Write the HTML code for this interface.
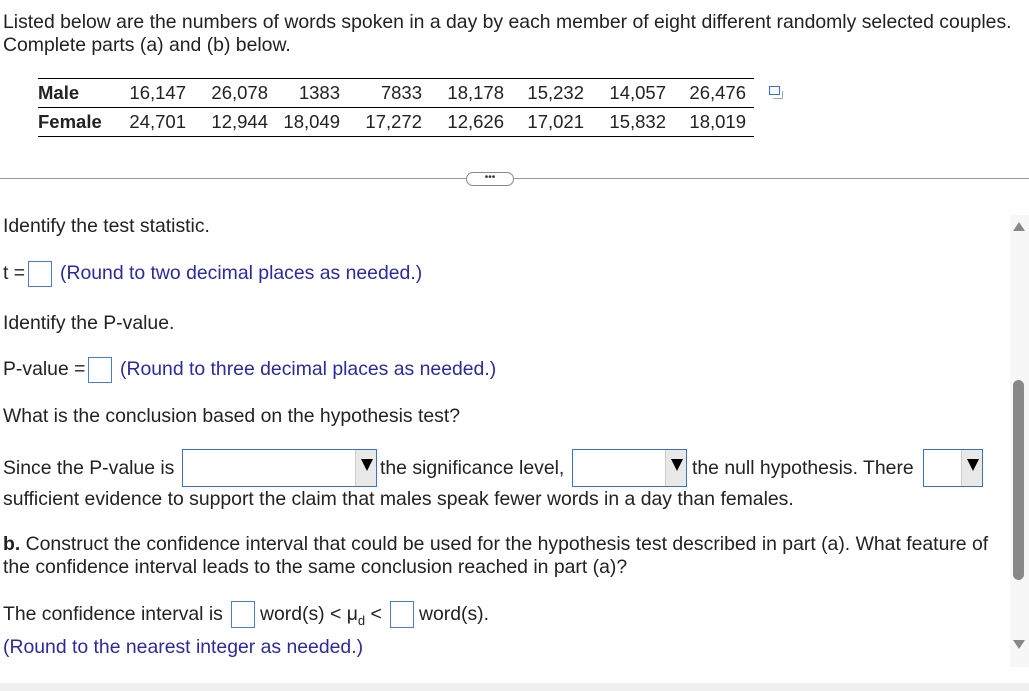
<!DOCTYPE html>
<html><head><style>
body{margin:0;width:1029px;height:691px;position:relative;overflow:hidden;background:#fff;font-family:"Liberation Sans",Arial,sans-serif;font-size:19.4px;color:#222;}
.a{position:absolute;white-space:nowrap;line-height:22px;}
.b{color:#2b2b9a;}
.box{position:absolute;border:1px solid #4a7bd6;background:#fff;}
.dd{position:absolute;border:1px solid #3b6fd4;background:#fff;}
.dd i{position:absolute;right:0;top:0;width:20px;height:100%;background:#e8e8e8;border-left:1px solid #ccc;}
.dd i:after{content:"";position:absolute;left:5px;top:9px;border-left:6px solid transparent;border-right:6px solid transparent;border-top:12px solid #000;}
table{position:absolute;left:38px;top:78px;border-collapse:collapse;font-size:18.5px;}
td{padding:1px 0;height:26px;text-align:right;}
tr:first-child td{border-top:1px solid #000;border-bottom:1px solid #000;}
tr:last-child td{border-bottom:1px solid #000;}
</style></head><body>
<div class="a" style="left:3px;top:11px">Listed below are the numbers of words spoken in a day by each member of eight different randomly selected couples.</div>
<div class="a" style="left:3px;top:34px">Complete parts (a) and (b) below.</div>
<table>
<tr><td style="text-align:left;width:86px"><b>Male</b></td><td style="width:62px">16,147</td><td style="width:82px">26,078</td><td style="width:72px">1383</td><td style="width:82px">7833</td><td style="width:82px">18,178</td><td style="width:80px">15,232</td><td style="width:82px">14,057</td><td style="width:80px">26,476</td><td style="width:8px"></td></tr>
<tr><td style="text-align:left"><b>Female</b></td><td>24,701</td><td>12,944</td><td>18,049</td><td>17,272</td><td>12,626</td><td>17,021</td><td>15,832</td><td>18,019</td><td></td></tr>
</table>
<div style="position:absolute;left:769px;top:86px;width:9px;height:7px;border:1.5px solid #3b6fd4"></div>
<div style="position:absolute;left:773px;top:91px;width:9px;height:7px;border:1px solid #9ab;border-top:none;border-left:none"></div>
<div style="position:absolute;left:0;top:178px;width:1029px;height:1px;background:#999"></div>
<div style="position:absolute;left:466px;top:172px;width:46px;height:12px;border:1px solid #888;border-radius:7px;background:#fff;font-size:10px;text-align:center;line-height:10px;color:#333">•••</div>
<div class="a" style="left:3px;top:215px">Identify the test statistic.</div>
<div class="a" style="left:3px;top:262px">t =</div>
<div class="box" style="left:28px;top:261px;width:22px;height:24px"></div>
<div class="a b" style="left:60px;top:262px">(Round to two decimal places as needed.)</div>
<div class="a" style="left:3px;top:312px">Identify the P-value.</div>
<div class="a" style="left:3px;top:358px">P-value =</div>
<div class="box" style="left:88px;top:357px;width:22px;height:24px"></div>
<div class="a b" style="left:120px;top:358px">(Round to three decimal places as needed.)</div>
<div class="a" style="left:3px;top:405px">What is the conclusion based on the hypothesis test?</div>
<div class="a" style="left:3px;top:457px">Since the P-value is</div>
<div class="dd" style="left:182px;top:449px;width:193px;height:36px"><i></i></div>
<div class="a" style="left:380px;top:457px">the significance level,</div>
<div class="dd" style="left:572px;top:449px;width:113px;height:36px"><i></i></div>
<div class="a" style="left:692px;top:457px">the null hypothesis. There</div>
<div class="dd" style="left:923px;top:449px;width:58px;height:36px"><i></i></div>
<div class="a" style="left:3px;top:488px">sufficient evidence to support the claim that males speak fewer words in a day than females.</div>
<div class="a" style="left:3px;top:533px"><b>b.</b> Construct the confidence interval that could be used for the hypothesis test described in part (a). What feature of</div>
<div class="a" style="left:3px;top:556px">the confidence interval leads to the same conclusion reached in part (a)?</div>
<div class="a" style="left:3px;top:603px">The confidence interval is</div>
<div class="box" style="left:231px;top:601px;width:22px;height:25px"></div>
<div class="a" style="left:260px;top:603px">word(s) &lt; μ<sub style="font-size:13px">d</sub> &lt;</div>
<div class="box" style="left:390px;top:601px;width:22px;height:25px"></div>
<div class="a" style="left:419px;top:603px">word(s).</div>
<div class="a b" style="left:3px;top:636px">(Round to the nearest integer as needed.)</div>
<div style="position:absolute;left:1010px;top:215px;width:19px;height:452px;background:#f7f7f7"></div>
<div style="position:absolute;left:1013px;top:222px;border-left:6px solid transparent;border-right:6px solid transparent;border-bottom:9px solid #888"></div>
<div style="position:absolute;left:1013px;top:640px;border-left:6px solid transparent;border-right:6px solid transparent;border-top:9px solid #888"></div>
<div style="position:absolute;left:1013px;top:380px;width:11px;height:200px;background:#888;border-radius:6px"></div>
<div style="position:absolute;left:0;top:683px;width:1029px;height:8px;background:#f0f0f0"></div>
</body></html>
